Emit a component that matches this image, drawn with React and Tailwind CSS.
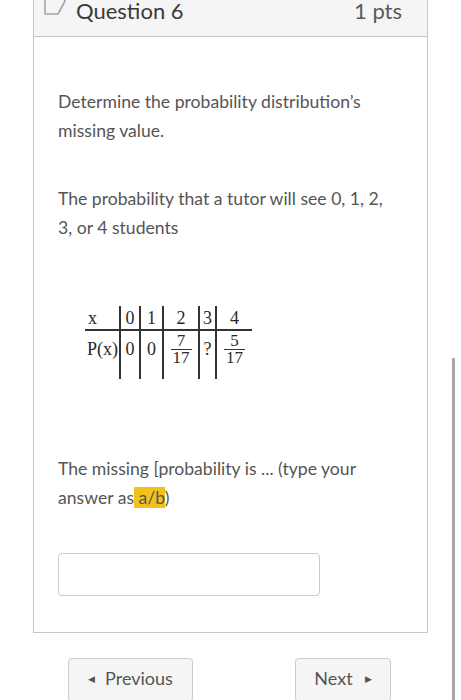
import React from 'react'

const cols = [
  { head: 'x', body: 'P(x)', w: 'w-[34px]', first: true },
  { head: '0', body: '0', w: 'w-[20px]' },
  { head: '1', body: '0', w: 'w-[23px]' },
  { head: '2', body: { n: '7', d: '17' }, w: 'w-[36px]' },
  { head: '3', body: '?', w: 'w-[17px]' },
  { head: '4', body: { n: '5', d: '17' }, w: 'w-[37px]' },
]

function Fraction({ n, d }) {
  return (
    <span className="inline-flex flex-col items-center text-[17px] leading-[16px]">
      <span className="px-[2px]">{n}</span>
      <span className="px-[2px] border-t-[1.5px] border-[#333]">{d}</span>
    </span>
  )
}

function DistTable() {
  return (
    <div className="ml-[27px] flex font-['Liberation_Serif',serif] text-[18px] text-[#2a2a2a]">
      {cols.map((c, i) => (
        <div key={i} className={`${c.w} flex flex-col ${c.first ? '' : 'border-l-2 border-[#333]'}`}>
          <div className={`h-[25px] border-b-2 border-[#333] flex items-end pb-[2px] leading-none ${c.first ? 'pl-[3px]' : 'justify-center'}`}>
            {c.head}
          </div>
          <div className={`h-[48px] pb-[12px] flex items-center ${c.first ? 'pl-[2px]' : 'justify-center'}`}>
            {typeof c.body === 'string' ? c.body : <Fraction n={c.body.n} d={c.body.d} />}
          </div>
        </div>
      ))}
    </div>
  )
}

export default function App() {
  return (
    <div className="relative w-[461px] h-[700px] overflow-hidden bg-white font-['Lato',sans-serif]">
      {/* question card */}
      <div className="ml-[33px] w-[395px] -mt-[16px] border border-[#c7c7c7]">
        <div className="h-[52px] bg-[#f5f5f5] border-b border-[#c7c7c7] flex items-center pl-[9px] pr-[25px]">
          <svg width="24" height="30" viewBox="0 0 24 30" className="self-start shrink-0">
            <polygon points="2,1 15,1 22,16 15,29 2,29" fill="none" stroke="#a0a7ad" strokeWidth="1.6" strokeLinejoin="round" />
          </svg>
          <span className="ml-[9px] text-[22px] leading-none text-[#3a3a3a]">Question 6</span>
          <span className="ml-auto text-[22px] leading-none text-[#5a5a5a]">1 pts</span>
        </div>

        <div className="pl-[24px] pr-[25px] pt-[50px] pb-[36px] text-[17.6px] leading-[29px] text-[#555]">
          <p>Determine the probability distribution’s missing value.</p>
          <p className="mt-[39px] max-w-[342px]">The probability that a tutor will see 0, 1, 2, 3, or 4 students</p>

          <div className="mt-[64px]">
            <DistTable />
          </div>

          <p className="mt-[75px] pr-[30px]">
            The missing [probability is ... (type your answer as<span className="bg-[#f1c21b]"> a/b</span>)
          </p>

          <input
            type="text"
            className="mt-[41px] block w-[262px] h-[43px] border border-[#c7cdd1] rounded-[4px] outline-none"
          />
        </div>
      </div>

      {/* nav buttons */}
      <div className="flex mt-[25px]">
        <button className="ml-[68px] w-[125px] h-[44px] pb-[3px] bg-[#f5f5f5] border border-[#c7cdd1] rounded-[4px] flex items-center justify-center gap-[10px] text-[18px] text-[#555]">
          <span className="text-[9px]">◀</span>
          <span>Previous</span>
        </button>
        <button className="ml-[102px] w-[96px] h-[44px] pb-[3px] bg-[#f5f5f5] border border-[#c7cdd1] rounded-[4px] flex items-center justify-center gap-[12px] text-[18px] text-[#555]">
          <span>Next</span>
          <span className="text-[9px]">▶</span>
        </button>
      </div>

      {/* scrollbar */}
      <div className="absolute left-[452px] top-[358px] w-[3px] h-[342px] bg-[#a8a8a8]" />
    </div>
  )
}
